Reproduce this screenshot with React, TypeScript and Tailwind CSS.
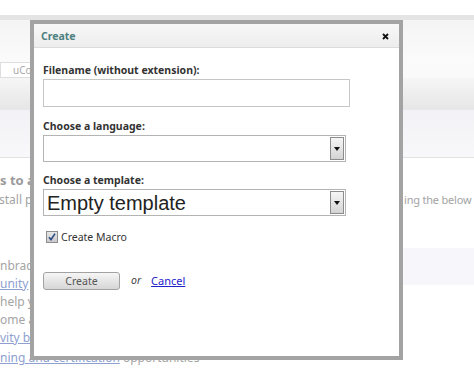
import React from "react";

const font = { fontFamily: '"Noto Sans", "DejaVu Sans", sans-serif' };

function Arrow() {
  return (
    <div className="absolute right-[1px] top-[1px] bottom-[1px] w-[14px] border border-[#8c8c8c] bg-gradient-to-b from-[#f6f6f6] to-[#d4d4d4] flex items-center justify-center">
      <svg width="6" height="4" viewBox="0 0 6 4">
        <path d="M0 0 L6 0 L3 4 Z" fill="#111" />
      </svg>
    </div>
  );
}

export default function App() {
  return (
    <div className="relative w-[474px] h-[390px] overflow-hidden bg-white" style={font}>
      {/* background page */}
      <div className="flex flex-col w-full">
        <div className="h-[15px] bg-white" />
        <div className="h-[5px] bg-[#e4e4e4]" />
        <div className="h-[42px] bg-gradient-to-b from-[#f4f4f4] to-[#fbfbfb]" />
        <div className="h-[16px] bg-[#fafafa] flex">
          <div className="w-[32px] h-[16px] border border-[#dedede] bg-white flex items-center pl-[12px] text-[10px] text-[#aaa] leading-none">
            uCo
          </div>
        </div>
        <div className="h-[32px] bg-gradient-to-b from-[#f6f6f6] to-[#e6e6e6] border-b border-[#e8e8e8]" />
        <div className="h-[48px] bg-gradient-to-b from-[#f2f2f6] to-[#f8f8fb] border-b border-[#e2e2e2]" />
        <div className="h-[80px] bg-white relative">
          <div className="absolute left-[0px] top-[16px] text-[13px] font-bold text-[#9a9a9a] leading-none">s to a</div>
          <div className="absolute left-[-1px] top-[36px] text-[12px] text-[#a4a4a4] leading-none">stall p</div>
          <div className="absolute left-[404px] top-[36px] text-[11px] text-[#a4a4a4] leading-none whitespace-nowrap tracking-[-0.2px]">ing the below</div>
        </div>
        <div className="h-[130px] bg-white flex">
          <div className="flex flex-col bg-white text-[12px] text-[#a4a4a4] leading-[18px] pt-[19px] whitespace-nowrap">
            <span>nbraco</span>
            <span className="text-[#8da0d0] underline">unity</span>
            <span>help y</span>
            <span>ome a</span>
            <span className="text-[#8da0d0] underline">vity b</span>
            <span className="mt-[2px]">
              <span className="text-[#8da0d0] underline">ning and certification</span> opportunities
            </span>
          </div>
          <div className="flex-1 h-[37px] mt-[10px] bg-[#f7f7fb]" />
        </div>
      </div>

      {/* dialog */}
      <div className="absolute left-[30px] top-[20px] w-[373px] h-[340px] border-[4px] border-[#a3a3a3] bg-white flex flex-col">
        <div className="h-[24px] shrink-0 bg-gradient-to-b from-[#f7f7f7] to-[#ededed] border-b border-[#dcdcdc] flex items-center justify-between pl-[7px] pr-[10px] pt-[2px]">
          <span className="text-[10.5px] font-bold text-[#4e8080]">Create</span>
          <svg width="7" height="7" viewBox="0 0 7 7">
            <path d="M1 1 L6 6 M6 1 L1 6" stroke="#111" strokeWidth="1.8" />
          </svg>
        </div>
        <div className="flex flex-col pl-[9px]">
          <div className="mt-[15px] text-[10.5px] font-bold text-[#333] leading-[14px]">Filename (without extension):</div>
          <div className="mt-[2px] w-[307px] h-[28px] border border-[#c6c6c6] bg-white" />
          <div className="mt-[12px] text-[10.5px] font-bold text-[#333] leading-[14px]">Choose a language:</div>
          <div className="mt-[2px] relative w-[303px] h-[27px] border border-[#b4b4b4] bg-white">
            <Arrow />
          </div>
          <div className="mt-[11px] text-[10.5px] font-bold text-[#333] leading-[14px]">Choose a template:</div>
          <div className="mt-[2px] relative w-[303px] h-[27px] border border-[#b4b4b4] bg-white flex items-center pl-[3px]">
            <span className="text-[20px] text-[#222] leading-none" style={{ fontFamily: '"Liberation Sans", Arial, sans-serif' }}>
              Empty template
            </span>
            <Arrow />
          </div>
          <div className="mt-[15px] flex items-center gap-[3px] pl-[3px]">
            <svg width="12" height="12" viewBox="0 0 12 12">
              <defs>
                <linearGradient id="cb" x1="0" y1="0" x2="0" y2="1">
                  <stop offset="0" stopColor="#e8e8e8" />
                  <stop offset="1" stopColor="#c8c8c8" />
                </linearGradient>
              </defs>
              <rect x="0.5" y="0.5" width="11" height="11" fill="url(#cb)" stroke="#8e8e8e" />
              <path d="M3 6.2 L5 8.6 L9 2.6" stroke="#2c4a86" strokeWidth="1.6" fill="none" />
            </svg>
            <span className="text-[10.5px] text-[#333] leading-none">Create Macro</span>
          </div>
          <div className="mt-[29px] flex items-center">
            <button className="w-[77px] h-[18px] rounded-[3px] border border-[#a2a2a2] bg-gradient-to-b from-[#f6f6f6] to-[#d6d6d6] text-[10.5px] text-[#555] leading-none flex items-center justify-center">
              Create
            </button>
            <span className="ml-[11px] text-[10.5px] italic text-[#444]">or</span>
            <span className="ml-[10px] text-[11px] text-[#2222cc] underline">Cancel</span>
          </div>
        </div>
      </div>
    </div>
  );
}
